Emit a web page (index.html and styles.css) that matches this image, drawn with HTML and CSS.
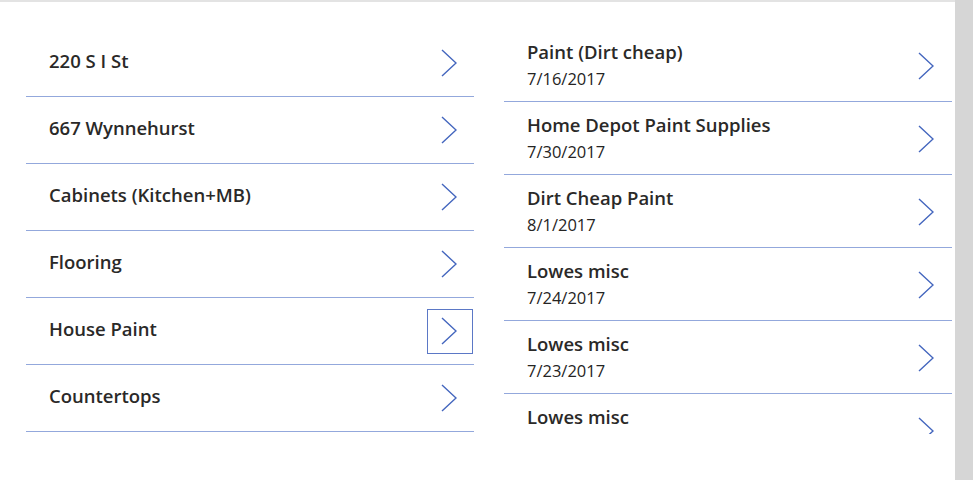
FILE: index.html
```html
<!DOCTYPE html>
<html>
<head>
<meta charset="utf-8">
<link rel="stylesheet" href="styles.css">
</head>
<body>
<div class="screen">
  <div class="canvas">
    <div class="list list-left">
      <div class="row"><span class="title">220 S I St</span><span class="chev"><svg width="16" height="28" viewBox="0 0 16 28"><polyline points="1,1 15,14 1,27"/></svg></span></div>
      <div class="row"><span class="title">667 Wynnehurst</span><span class="chev"><svg width="16" height="28" viewBox="0 0 16 28"><polyline points="1,1 15,14 1,27"/></svg></span></div>
      <div class="row"><span class="title">Cabinets (Kitchen+MB)</span><span class="chev"><svg width="16" height="28" viewBox="0 0 16 28"><polyline points="1,1 15,14 1,27"/></svg></span></div>
      <div class="row"><span class="title">Flooring</span><span class="chev"><svg width="16" height="28" viewBox="0 0 16 28"><polyline points="1,1 15,14 1,27"/></svg></span></div>
      <div class="row"><span class="title">House Paint</span><span class="chev focused"><svg width="16" height="28" viewBox="0 0 16 28"><polyline points="1,1 15,14 1,27"/></svg></span></div>
      <div class="row"><span class="title">Countertops</span><span class="chev"><svg width="16" height="28" viewBox="0 0 16 28"><polyline points="1,1 15,14 1,27"/></svg></span></div>
    </div>
    <div class="list list-right">
      <div class="row row2"><div class="texts"><span class="title">Paint (Dirt cheap)</span><span class="date">7/16/2017</span></div><span class="chev"><svg width="16" height="28" viewBox="0 0 16 28"><polyline points="1,1 15,14 1,27"/></svg></span></div>
      <div class="row row2"><div class="texts"><span class="title">Home Depot Paint Supplies</span><span class="date">7/30/2017</span></div><span class="chev"><svg width="16" height="28" viewBox="0 0 16 28"><polyline points="1,1 15,14 1,27"/></svg></span></div>
      <div class="row row2"><div class="texts"><span class="title">Dirt Cheap Paint</span><span class="date">8/1/2017</span></div><span class="chev"><svg width="16" height="28" viewBox="0 0 16 28"><polyline points="1,1 15,14 1,27"/></svg></span></div>
      <div class="row row2"><div class="texts"><span class="title">Lowes misc</span><span class="date">7/24/2017</span></div><span class="chev"><svg width="16" height="28" viewBox="0 0 16 28"><polyline points="1,1 15,14 1,27"/></svg></span></div>
      <div class="row row2"><div class="texts"><span class="title">Lowes misc</span><span class="date">7/23/2017</span></div><span class="chev"><svg width="16" height="28" viewBox="0 0 16 28"><polyline points="1,1 15,14 1,27"/></svg></span></div>
      <div class="row row2"><div class="texts"><span class="title">Lowes misc</span><span class="date date-hidden"></span></div><span class="chev"><svg width="16" height="28" viewBox="0 0 16 28"><polyline points="1,1 15,14 1,27"/></svg></span></div>
    </div>
  </div>
  <div class="scrollstrip"></div>
</div>
</body>
</html>
```

FILE: styles.css
```css
* { box-sizing: border-box; }
html, body { margin: 0; padding: 0; background: #ffffff; }
body {
  font-family: "Open Sans", "Noto Sans", sans-serif;
  color: #252423;
  width: 973px;
  height: 480px;
  overflow: hidden;
}
.screen {
  display: flex;
  height: 480px;
  border-top: 2px solid #e3e3e3;
}
.canvas {
  flex: 1;
  display: flex;
  align-items: flex-start;
  gap: 30px;
  padding: 27px 0 0 26px;
  background: #ffffff;
}
.scrollstrip {
  width: 18px;
  background: #d6d6d6;
  margin-top: -2px;
}
.list { width: 448px; }
.list-left { margin-top: 1px; }
.list-right {
  height: 405px;
  overflow: hidden;
}
.row {
  display: flex;
  align-items: center;
  justify-content: space-between;
  height: 67px;
  padding: 0 17px 0 23px;
  border-bottom: 1px solid #93a8dc;
}
.row2 {
  height: 73px;
  padding-right: 18px;
}
.list-left .title { margin-bottom: 6px; }
.title {
  font-size: 18.5px;
  font-weight: 600;
  line-height: 25px;
  color: #2a2928;
}
.texts {
  display: flex;
  flex-direction: column;
  gap: 4px;
  margin-bottom: 1px;
}
.date {
  font-size: 16.5px;
  font-weight: 400;
  line-height: 22px;
}
.date-hidden { height: 22px; }
.chev {
  display: flex;
  align-items: center;
  justify-content: center;
  width: 16px;
  height: 28px;
}
.row2 .chev { margin-top: 2px; }
.chev svg polyline {
  fill: none;
  stroke: #4466be;
  stroke-width: 1.4;
}
.chev.focused {
  position: relative;
}
.chev.focused::after {
  content: "";
  position: absolute;
  left: -14px;
  top: -8px;
  width: 44px;
  height: 43px;
  border: 1.5px solid #5b78c6;
}
```
